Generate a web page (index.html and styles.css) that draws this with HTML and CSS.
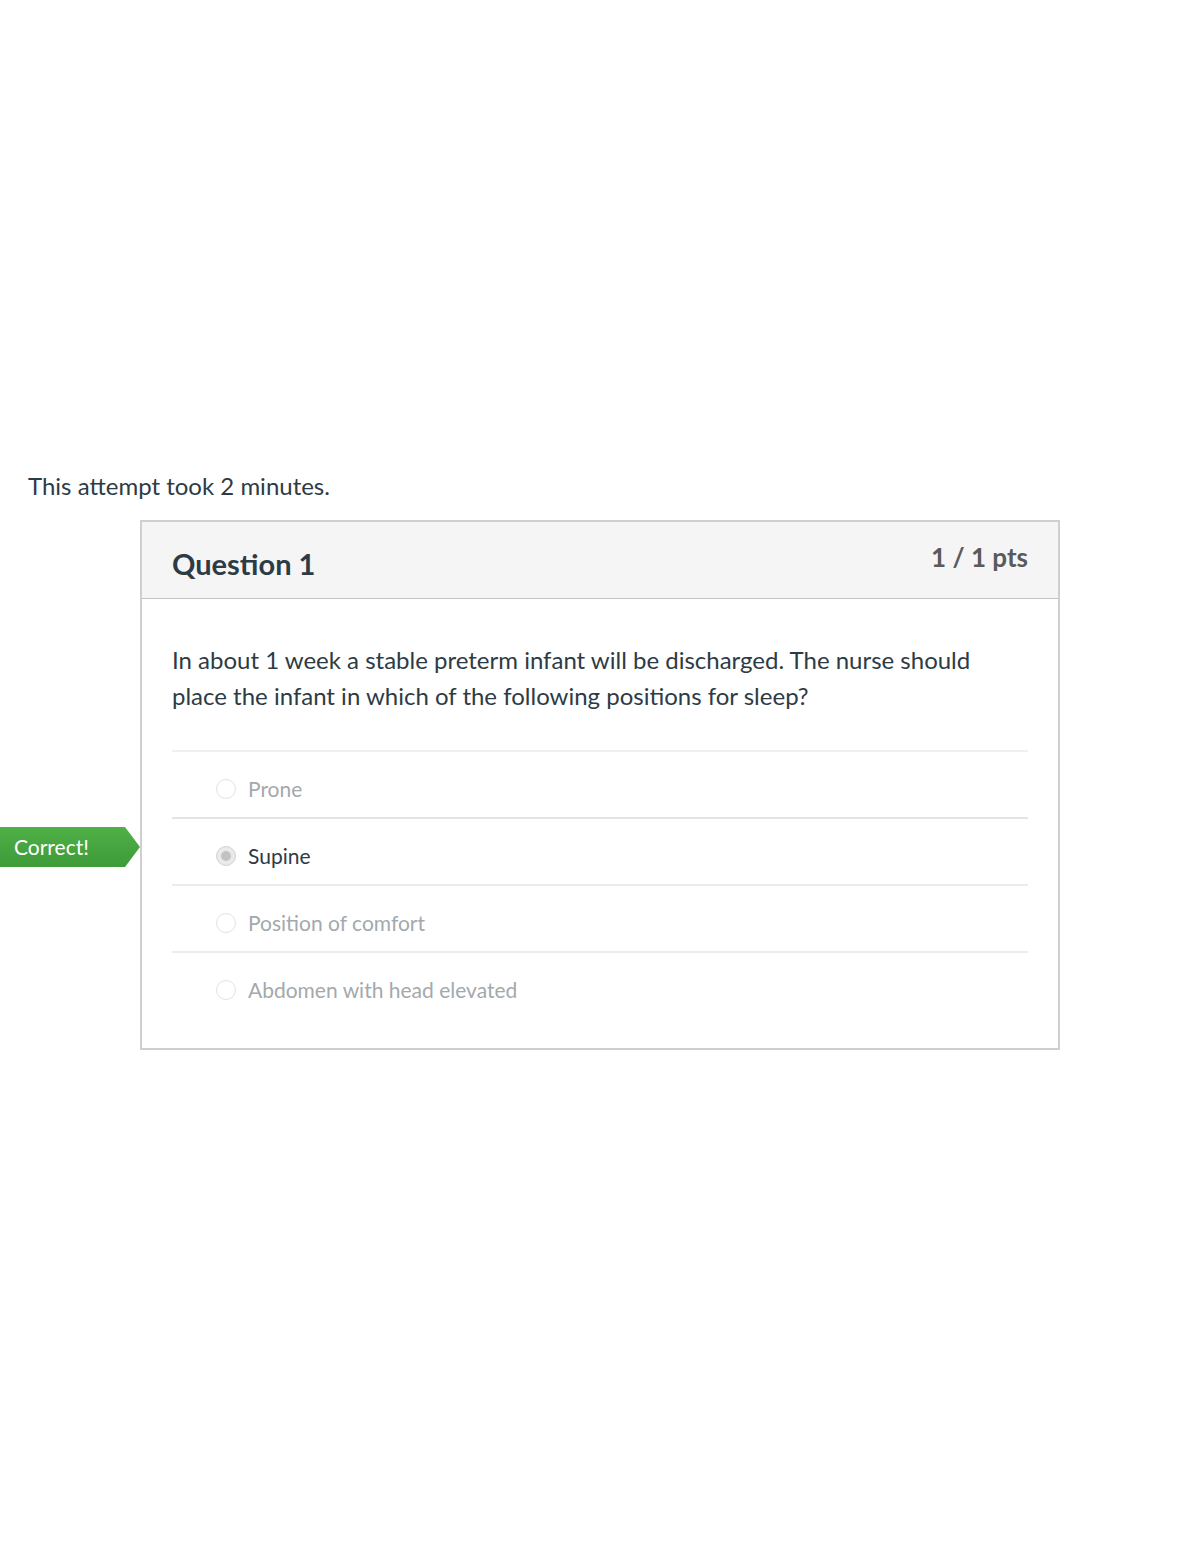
FILE: index.html
```html
<!DOCTYPE html>
<html lang="en">
<head>
    <meta charset="UTF-8">
    <title>Quiz Results</title>
    <link rel="stylesheet" href="styles.css">
</head>
<body>
    <div class="page">
        <p class="attempt">This attempt took 2 minutes.</p>

        <div class="question-wrap">
            <div class="answer-flag">Correct!</div>

            <div class="question">
                <div class="question-header">
                    <h2>Question 1</h2>
                    <span class="pts">1 / 1 pts</span>
                </div>
                <div class="question-body">
                    <p class="question-text">In about 1 week a stable preterm infant will be discharged. The nurse should place the infant in which of the following positions for sleep?</p>

                    <div class="answers">
                        <div class="answer">
                            <span class="radio"></span>
                            <span class="answer-text">Prone</span>
                        </div>
                        <div class="answer selected">
                            <span class="radio"></span>
                            <span class="answer-text">Supine</span>
                        </div>
                        <div class="answer">
                            <span class="radio"></span>
                            <span class="answer-text">Position of comfort</span>
                        </div>
                        <div class="answer">
                            <span class="radio"></span>
                            <span class="answer-text">Abdomen with head elevated</span>
                        </div>
                    </div>
                </div>
            </div>
        </div>
    </div>
</body>
</html>
```

FILE: styles.css
```css
body {
    margin: 0;
    background: #fff;
    font-family: Lato, 'Noto Sans', sans-serif;
    color: #2d3b45;
}
.page {
    padding-top: 470px;
}
.attempt {
    margin: 0 0 18px 28px;
    font-size: 24px;
    line-height: 32px;
}
.question-wrap {
    position: relative;
    margin-left: 140px;
    width: 920px;
}
.answer-flag {
    position: absolute;
    left: -140px;
    top: 307px;
    width: 140px;
    height: 40px;
    padding-left: 14px;
    box-sizing: border-box;
    line-height: 40px;
    font-size: 21px;
    color: #fff;
    background: linear-gradient(#4fb047, #3e9b39);
    clip-path: polygon(0 0, 125px 0, 140px 50%, 125px 100%, 0 100%);
}
.question {
    border: 2px solid #cfcfcf;
}
.question-header {
    display: flex;
    justify-content: space-between;
    align-items: flex-start;
    height: 76px;
    padding: 0 30px;
    background: #f5f5f5;
    border-bottom: 1px solid #c4c4c4;
}
.question-header h2 {
    margin: 24px 0 0;
    font-size: 29px;
    font-weight: 700;
    line-height: 36px;
}
.pts {
    margin-top: 19px;
    font-size: 26px;
    font-weight: 700;
    color: #5a5a5a;
    line-height: 32px;
}
.question-body {
    padding: 43px 30px 30px;
}
.question-text {
    margin: 0 0 36px;
    font-size: 24px;
    line-height: 36px;
}
.answers {
    border-top: 2px solid #f0f0f0;
}
.answer {
    display: flex;
    align-items: center;
    height: 57px;
    padding: 8px 0 0 44px;
    border-bottom: 2px solid #ececec;
}
.answer:last-child {
    border-bottom: none;
}
.answer:first-child {
    border-bottom-color: #e4e4e4;
}
.radio {
    width: 18px;
    height: 18px;
    border: 1px solid #e2e2e2;
    border-radius: 50%;
    margin-right: 12px;
    background: #fff;
    position: relative;
}
.selected .radio {
    border-color: #d2d2d2;
    background: #eaeaea;
}
.selected .radio::after {
    content: "";
    position: absolute;
    left: 4px;
    top: 4px;
    width: 10px;
    height: 10px;
    border-radius: 50%;
    background: #c2c2c2;
}
.answer-text {
    font-size: 21px;
    color: #a3a9ad;
}
.selected .answer-text {
    color: #2d3b45;
}
```
